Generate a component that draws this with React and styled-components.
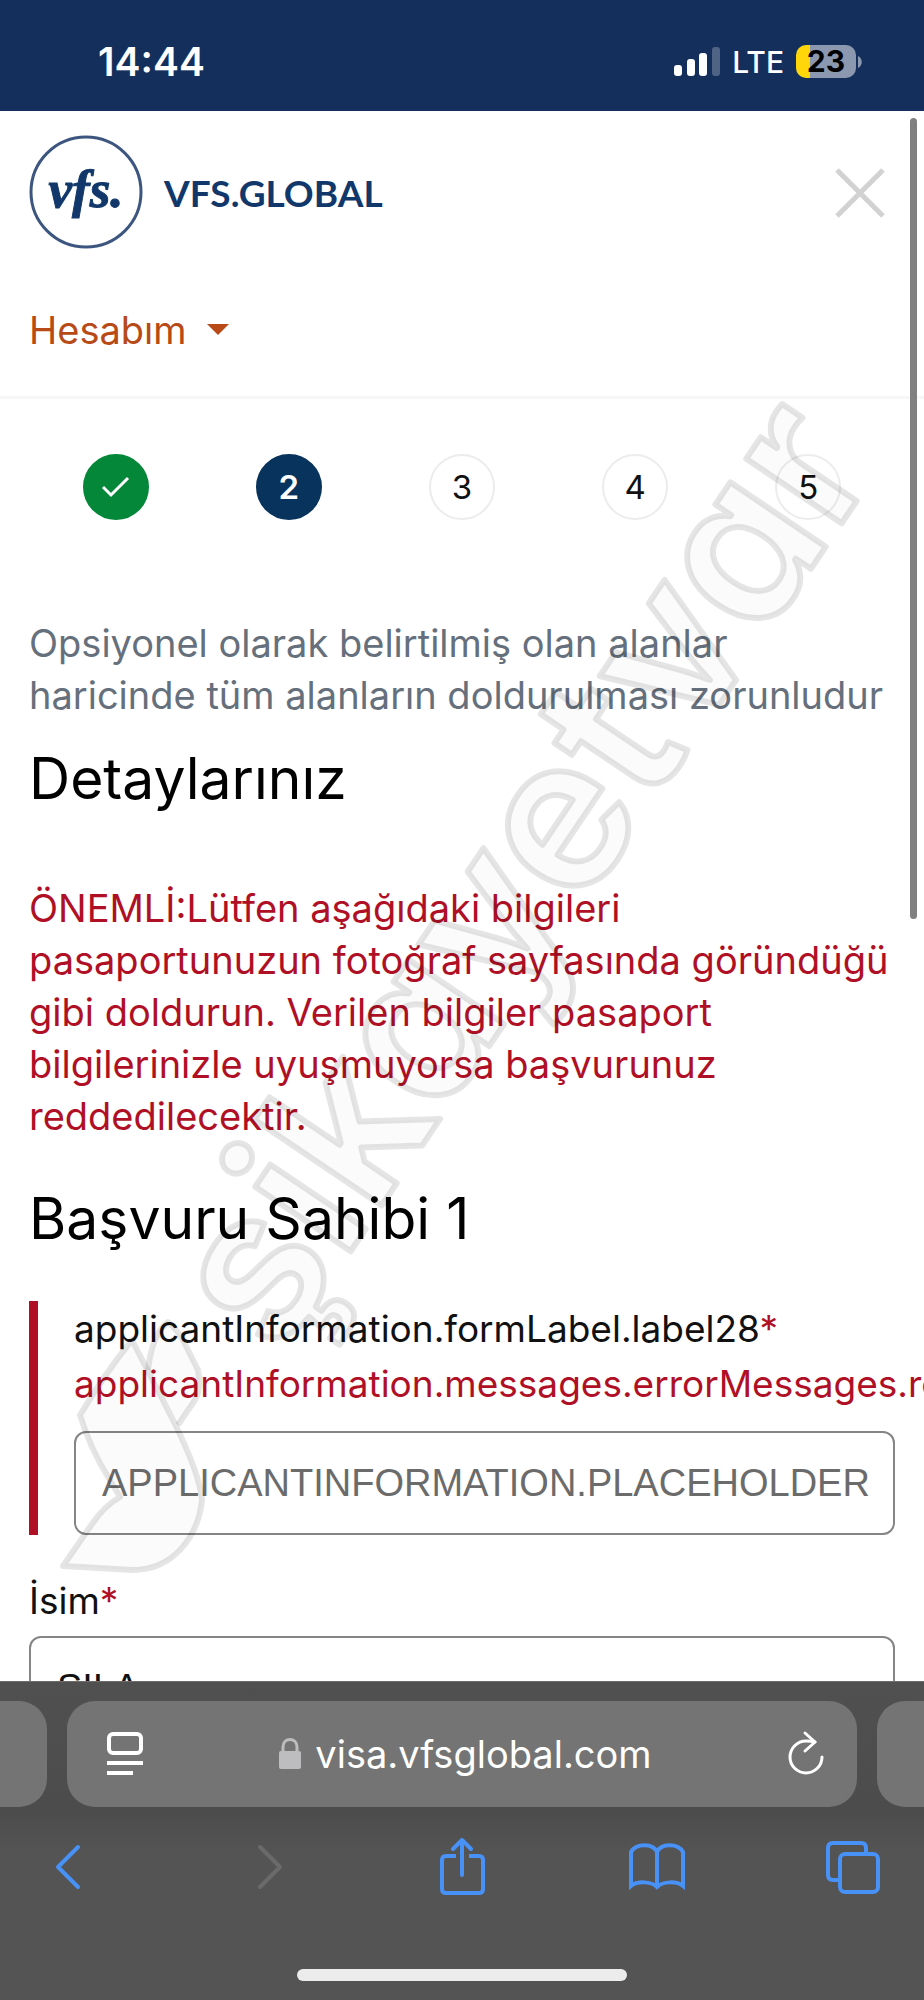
import styled, { createGlobalStyle } from "styled-components";

const GlobalStyle = createGlobalStyle`
  * {
    box-sizing: border-box;
  }
  body {
    margin: 0;
    background: #fff;
    font-family: Inter, Roboto, sans-serif;
    font-size: 38px;
    line-height: 52px;
    color: #111;
  }
`;

const App = () => {
  return (
    <Screen>
      <GlobalStyle />
      <StatusBar>
        <Clock>14:44</Clock>
        <StatusIcons>
          <SignalIcon />
          <Network>LTE</Network>
          <Battery>23</Battery>
          <BatteryTip />
        </StatusIcons>
      </StatusBar>
      <Page>
        <Header>
          <Brand>
            <Logo href="#">
              <LogoMark />
              VFS.GLOBAL
            </Logo>
            <PlainButton aria-label="Kapat">
              <CloseIcon />
            </PlainButton>
          </Brand>
          <AccountButton>
            Hesabım
            <Caret />
          </AccountButton>
        </Header>
        <Main>
          <Steps>
            <Step>
              <StepDot $state="done">
                <CheckIcon />
              </StepDot>
            </Step>
            <Step>
              <StepDot $state="active">2</StepDot>
            </Step>
            <Step>
              <StepDot>3</StepDot>
            </Step>
            <Step>
              <StepDot>4</StepDot>
            </Step>
            <Step>
              <StepDot>5</StepDot>
            </Step>
          </Steps>
          <Hint>
            Opsiyonel olarak belirtilmiş olan alanlar haricinde tüm alanların
            doldurulması zorunludur
          </Hint>
          <Title>Detaylarınız</Title>
          <Warning>
            ÖNEMLİ:Lütfen aşağıdaki bilgileri pasaportunuzun fotoğraf sayfasında
            göründüğü gibi doldurun. Verilen bilgiler pasaport bilgilerinizle
            uyuşmuyorsa başvurunuz reddedilecektir.
          </Warning>
          <SectionTitle>Başvuru Sahibi 1</SectionTitle>
          <Field $invalid>
            <Label htmlFor="reference">
              applicantInformation.formLabel.label28<Star>*</Star>
            </Label>
            <ErrorText>
              applicantInformation.messages.errorMessages.required
            </ErrorText>
            <Input
              id="reference"
              type="text"
              placeholder="APPLICANTINFORMATION.PLACEHOLDER"
            />
          </Field>
          <Field>
            <Label htmlFor="firstName">
              İsim<Star>*</Star>
            </Label>
            <Input id="firstName" type="text" defaultValue="SILA" />
          </Field>
        </Main>
        <ScrollThumb />
      </Page>
      <BrowserBar>
        <Tabs>
          <SideTab $side="left" />
          <AddressBar>
            <PlainButton aria-label="Sayfa menüsü">
              <ReaderIcon />
            </PlainButton>
            <Address>
              <LockIcon />
              visa.vfsglobal.com
            </Address>
            <PlainButton aria-label="Yenile">
              <ReloadIcon />
            </PlainButton>
          </AddressBar>
          <SideTab $side="right" />
        </Tabs>
        <Toolbar>
          <PlainButton aria-label="Geri">
            <BackIcon />
          </PlainButton>
          <PlainButton aria-label="İleri" disabled>
            <ForwardIcon />
          </PlainButton>
          <PlainButton aria-label="Paylaş">
            <ShareIcon />
          </PlainButton>
          <PlainButton aria-label="Yer imleri">
            <BookIcon />
          </PlainButton>
          <PlainButton aria-label="Sekmeler">
            <TabsIcon />
          </PlainButton>
        </Toolbar>
        <HomeIndicator />
      </BrowserBar>
      <Watermark />
    </Screen>
  );
};

//icons
const SignalIcon = () => (
  <svg width="46" height="30" viewBox="0 0 46 30">
    <g fill="#fff">
      <rect x="0" y="18" width="8" height="11" rx="3" />
      <rect x="13" y="12" width="8" height="17" rx="3" />
      <rect x="25" y="6" width="8" height="23" rx="3" />
      <rect x="38" y="0" width="8" height="29" rx="3" opacity="0.25" />
    </g>
  </svg>
);

const BatteryTip = () => (
  <svg width="4" height="12" viewBox="0 0 4 12">
    <path d="M0 0C5 2 5 10 0 12Z" fill="#8b98af" />
  </svg>
);

const LogoMark = () => (
  <svg width="115" height="115" viewBox="0 0 115 115">
    <circle
      cx="57"
      cy="57"
      r="55"
      fill="none"
      stroke="#3d5680"
      strokeWidth="3"
    />
    <text
      x="57"
      y="72"
      textAnchor="middle"
      fontFamily="Liberation Serif, serif"
      fontStyle="italic"
      fontSize="53"
      fill="#12386b"
      stroke="#12386b"
      strokeWidth="1"
    >
      vfs.
    </text>
  </svg>
);

const CloseIcon = () => (
  <svg width="50" height="50" viewBox="0 0 50 50">
    <path d="M2 2L48 48M48 2L2 48" stroke="#d2d2d2" strokeWidth="5" />
  </svg>
);

const Caret = () => (
  <svg width="22" height="12" viewBox="0 0 22 12">
    <path d="M0 0H22L11 11Z" fill="#b84a17" />
  </svg>
);

const CheckIcon = () => (
  <svg width="28" height="22" viewBox="0 0 28 22">
    <path d="M1 11L9 19L26 2" fill="none" stroke="#fff" strokeWidth="3" />
  </svg>
);

const ReaderIcon = () => (
  <svg width="36" height="44" viewBox="0 0 36 44">
    <g fill="none" stroke="#fff" strokeWidth="4">
      <rect x="2" y="2" width="32" height="19" rx="4" />
      <path d="M0 31H36M0 41H26" />
    </g>
  </svg>
);

const LockIcon = () => (
  <svg width="22" height="32" viewBox="0 0 22 32">
    <path
      d="M4 15V9C4 -1 18 -1 18 9V15"
      fill="none"
      stroke="#bdbdbf"
      strokeWidth="3"
    />
    <rect x="0" y="13" width="22" height="18" rx="2" fill="#bdbdbf" />
  </svg>
);

const ReloadIcon = () => (
  <svg width="36" height="48" viewBox="0 0 36 48">
    <g
      fill="none"
      stroke="#fff"
      strokeWidth="3"
      strokeLinecap="round"
      strokeLinejoin="round"
    >
      <path d="M27 12C24 11 21 11 18 11A16 16 0 1 0 34 27" />
      <path d="M17 3L27 12L17 21" />
    </g>
  </svg>
);

const BackIcon = () => (
  <svg width="58" height="58" viewBox="0 0 58 58">
    <path
      d="M38 9L18 29L38 49"
      fill="none"
      stroke="#4791f7"
      strokeWidth="4"
      strokeLinecap="round"
      strokeLinejoin="round"
    />
  </svg>
);

const ForwardIcon = () => (
  <svg width="58" height="58" viewBox="0 0 58 58">
    <path
      d="M24 9L44 29L24 49"
      fill="none"
      stroke="#6a6a6a"
      strokeWidth="4"
      strokeLinecap="round"
      strokeLinejoin="round"
    />
  </svg>
);

const ShareIcon = () => (
  <svg width="58" height="58" viewBox="0 0 58 58">
    <g
      fill="none"
      stroke="#4791f7"
      strokeWidth="4"
      strokeLinecap="round"
      strokeLinejoin="round"
    >
      <path
        d="M24 18H14Q10 18 10 22V51Q10 55 14 55H47Q51 55 51 51V22Q51 18 47 18H37"
        strokeLinecap="butt"
      />
      <path d="M30 37V3M21 11L30 2L39 11" />
    </g>
  </svg>
);

const BookIcon = () => (
  <svg width="58" height="58" viewBox="0 0 58 58">
    <path
      d="M29 14C25 5 8 5 3 14V48C9 43 23 43 29 49C35 43 49 43 55 48V14C50 5 33 5 29 14V49"
      fill="none"
      stroke="#4791f7"
      strokeWidth="4"
    />
  </svg>
);

const TabsIcon = () => (
  <svg width="58" height="58" viewBox="0 0 58 58">
    <g fill="none" stroke="#4791f7" strokeWidth="4">
      <rect x="16" y="16" width="38" height="38" rx="5" />
      <path d="M16 42H9Q4 42 4 37V10Q4 5 9 5H37Q42 5 42 10V16" />
    </g>
  </svg>
);

const Watermark = () => (
  <Overlay viewBox="0 0 924 2000" aria-hidden="true">
    <g
      fill="#000"
      fillOpacity="0.015"
      stroke="#000"
      strokeOpacity="0.1"
      strokeWidth="6"
      strokeLinejoin="round"
    >
      <path d="M132 1340Q106 1372 80 1415Q90 1448 108 1477L120 1497Q104 1506 92 1524L63 1566L133 1570C172 1570 198 1538 202 1500C200 1478 186 1446 173 1420Z" />
      <path d="M148 1370Q152 1334 168 1322Q178 1330 185 1344L198 1370Q202 1388 195 1400L178 1425" />
      <text
        transform="translate(278 1359) rotate(-56)"
        fontFamily="Inter, sans-serif"
        fontWeight="600"
        fontSize="211"
      >
        şikayetvar
      </text>
    </g>
  </Overlay>
);

//styles
const Screen = styled.div`
  position: relative;
  display: flex;
  flex-direction: column;
  height: 100vh;
  overflow: hidden;
`;
const StatusBar = styled.div`
  display: flex;
  align-items: center;
  justify-content: space-between;
  flex: none;
  height: 111px;
  padding: 12px 62px 0 98px;
  background: #142f5c;
  color: #fff;
`;
const Clock = styled.span`
  font-size: 39px;
  font-weight: 600;
`;
const StatusIcons = styled.div`
  display: flex;
  align-items: center;
`;
const Network = styled.span`
  margin: 0 12px;
  font-size: 30px;
  font-weight: 500;
`;
const Battery = styled.span`
  width: 60px;
  height: 33px;
  margin-right: 2px;
  border-radius: 10px;
  background: linear-gradient(to right, #ffd60a 23%, #8b98af 23%);
  color: #000;
  font-size: 30px;
  font-weight: 700;
  line-height: 33px;
  text-align: center;
`;
const Page = styled.div`
  position: relative;
  flex: 1;
  min-height: 0;
  overflow: hidden;
`;
const Header = styled.header`
  padding: 24px 29px 40px;
  border-bottom: 3px solid #f7f7f7;
`;
const Brand = styled.div`
  display: flex;
  align-items: center;
  justify-content: space-between;
  padding-right: 10px;
`;
const Logo = styled.a`
  display: flex;
  align-items: center;
  gap: 20px;
  color: #12386b;
  font-family: Lato, sans-serif;
  font-size: 37px;
  font-weight: 700;
  text-decoration: none;
`;
const PlainButton = styled.button`
  display: flex;
  padding: 0;
  border: 0;
  background: none;
`;
const AccountButton = styled(PlainButton)`
  align-items: center;
  gap: 20px;
  margin-top: 54px;
  color: #b84a17;
  font: inherit;
`;
const Main = styled.main`
  padding: 55px 29px 0;
`;
const Steps = styled.ol`
  display: grid;
  grid-template-columns: repeat(5, 1fr);
  margin: 0 0 97px;
  padding: 0;
  list-style: none;
`;
const Step = styled.li`
  display: flex;
  justify-content: center;
`;
const stepColors = {
  done: "#05873a",
  active: "#08335c",
};
const StepDot = styled.span`
  display: flex;
  align-items: center;
  justify-content: center;
  width: 66px;
  height: 66px;
  border: 2px solid ${({ $state }) => stepColors[$state] || "#ececec"};
  border-radius: 50%;
  background: ${({ $state }) => stepColors[$state] || "#fff"};
  color: ${({ $state }) => ($state ? "#fff" : "#111")};
  font-size: 33px;
  font-weight: ${({ $state }) => ($state ? 600 : 400)};
`;
const Hint = styled.p`
  margin: 0;
  color: #65707c;
`;
const Title = styled.h1`
  margin: 24px 0 69px;
  color: #000;
  font-size: 57px;
  font-weight: 400;
  line-height: 68px;
`;
const SectionTitle = styled(Title).attrs({ as: "h2" })`
  margin: 43px 0 48px;
`;
const Warning = styled.p`
  margin: 0;
  color: #b01025;
`;
const Field = styled.div`
  display: flex;
  flex-direction: column;
  margin-bottom: 38px;
  padding-left: ${({ $invalid }) => ($invalid ? "36px" : "0")};
  border-left: ${({ $invalid }) => ($invalid ? "9px solid #b01025" : "0")};
  font-size: 37px;
`;
const Label = styled.label`
  line-height: 55px;
`;
const Star = styled.span`
  color: #b01025;
`;
const ErrorText = styled.span`
  margin-bottom: 12px;
  color: #b01025;
  line-height: 55px;
  white-space: nowrap;
`;
const Input = styled.input`
  width: 100%;
  height: 104px;
  margin-top: 8px;
  padding: 0 20px 0 26px;
  border: 2px solid #858585;
  border-radius: 12px;
  background: #fff;
  color: #111;
  font-family: "Liberation Sans", Arial, sans-serif;
  font-size: 38px;
  &::placeholder {
    color: #6b6b6b;
    opacity: 1;
  }
`;
const ScrollThumb = styled.div`
  position: absolute;
  top: 7px;
  right: 7px;
  width: 7px;
  height: 51%;
  border-radius: 4px;
  background: #808080;
`;
const BrowserBar = styled.footer`
  flex: none;
  padding: 19px 0;
  border-top: 1px solid #6c6c6c;
  background: linear-gradient(#505050, #4c4c4c 130px, #545454 170px);
`;
const Tabs = styled.div`
  display: flex;
  gap: 20px;
`;
const SideTab = styled.div`
  width: 47px;
  border-radius: ${({ $side }) =>
    $side === "left" ? "0 28px 28px 0" : "28px 0 0 28px"};
  background: #747474;
`;
const AddressBar = styled.div`
  display: flex;
  flex: 1;
  align-items: center;
  justify-content: space-between;
  height: 106px;
  padding: 0 33px 0 40px;
  border-radius: 28px;
  background: #747474;
  color: #fff;
`;
const Address = styled.div`
  display: flex;
  align-items: center;
  gap: 14px;
`;
const Toolbar = styled.nav`
  display: flex;
  justify-content: space-between;
  padding: 31px 42px 0 40px;
`;
const HomeIndicator = styled.div`
  width: 330px;
  height: 12px;
  margin: 73px auto 0;
  border-radius: 6px;
  background: #ececec;
`;
const Overlay = styled.svg`
  position: absolute;
  inset: 0;
  width: 100%;
  pointer-events: none;
  text {
    font-feature-settings: "cv11";
  }
`;

export default App;
